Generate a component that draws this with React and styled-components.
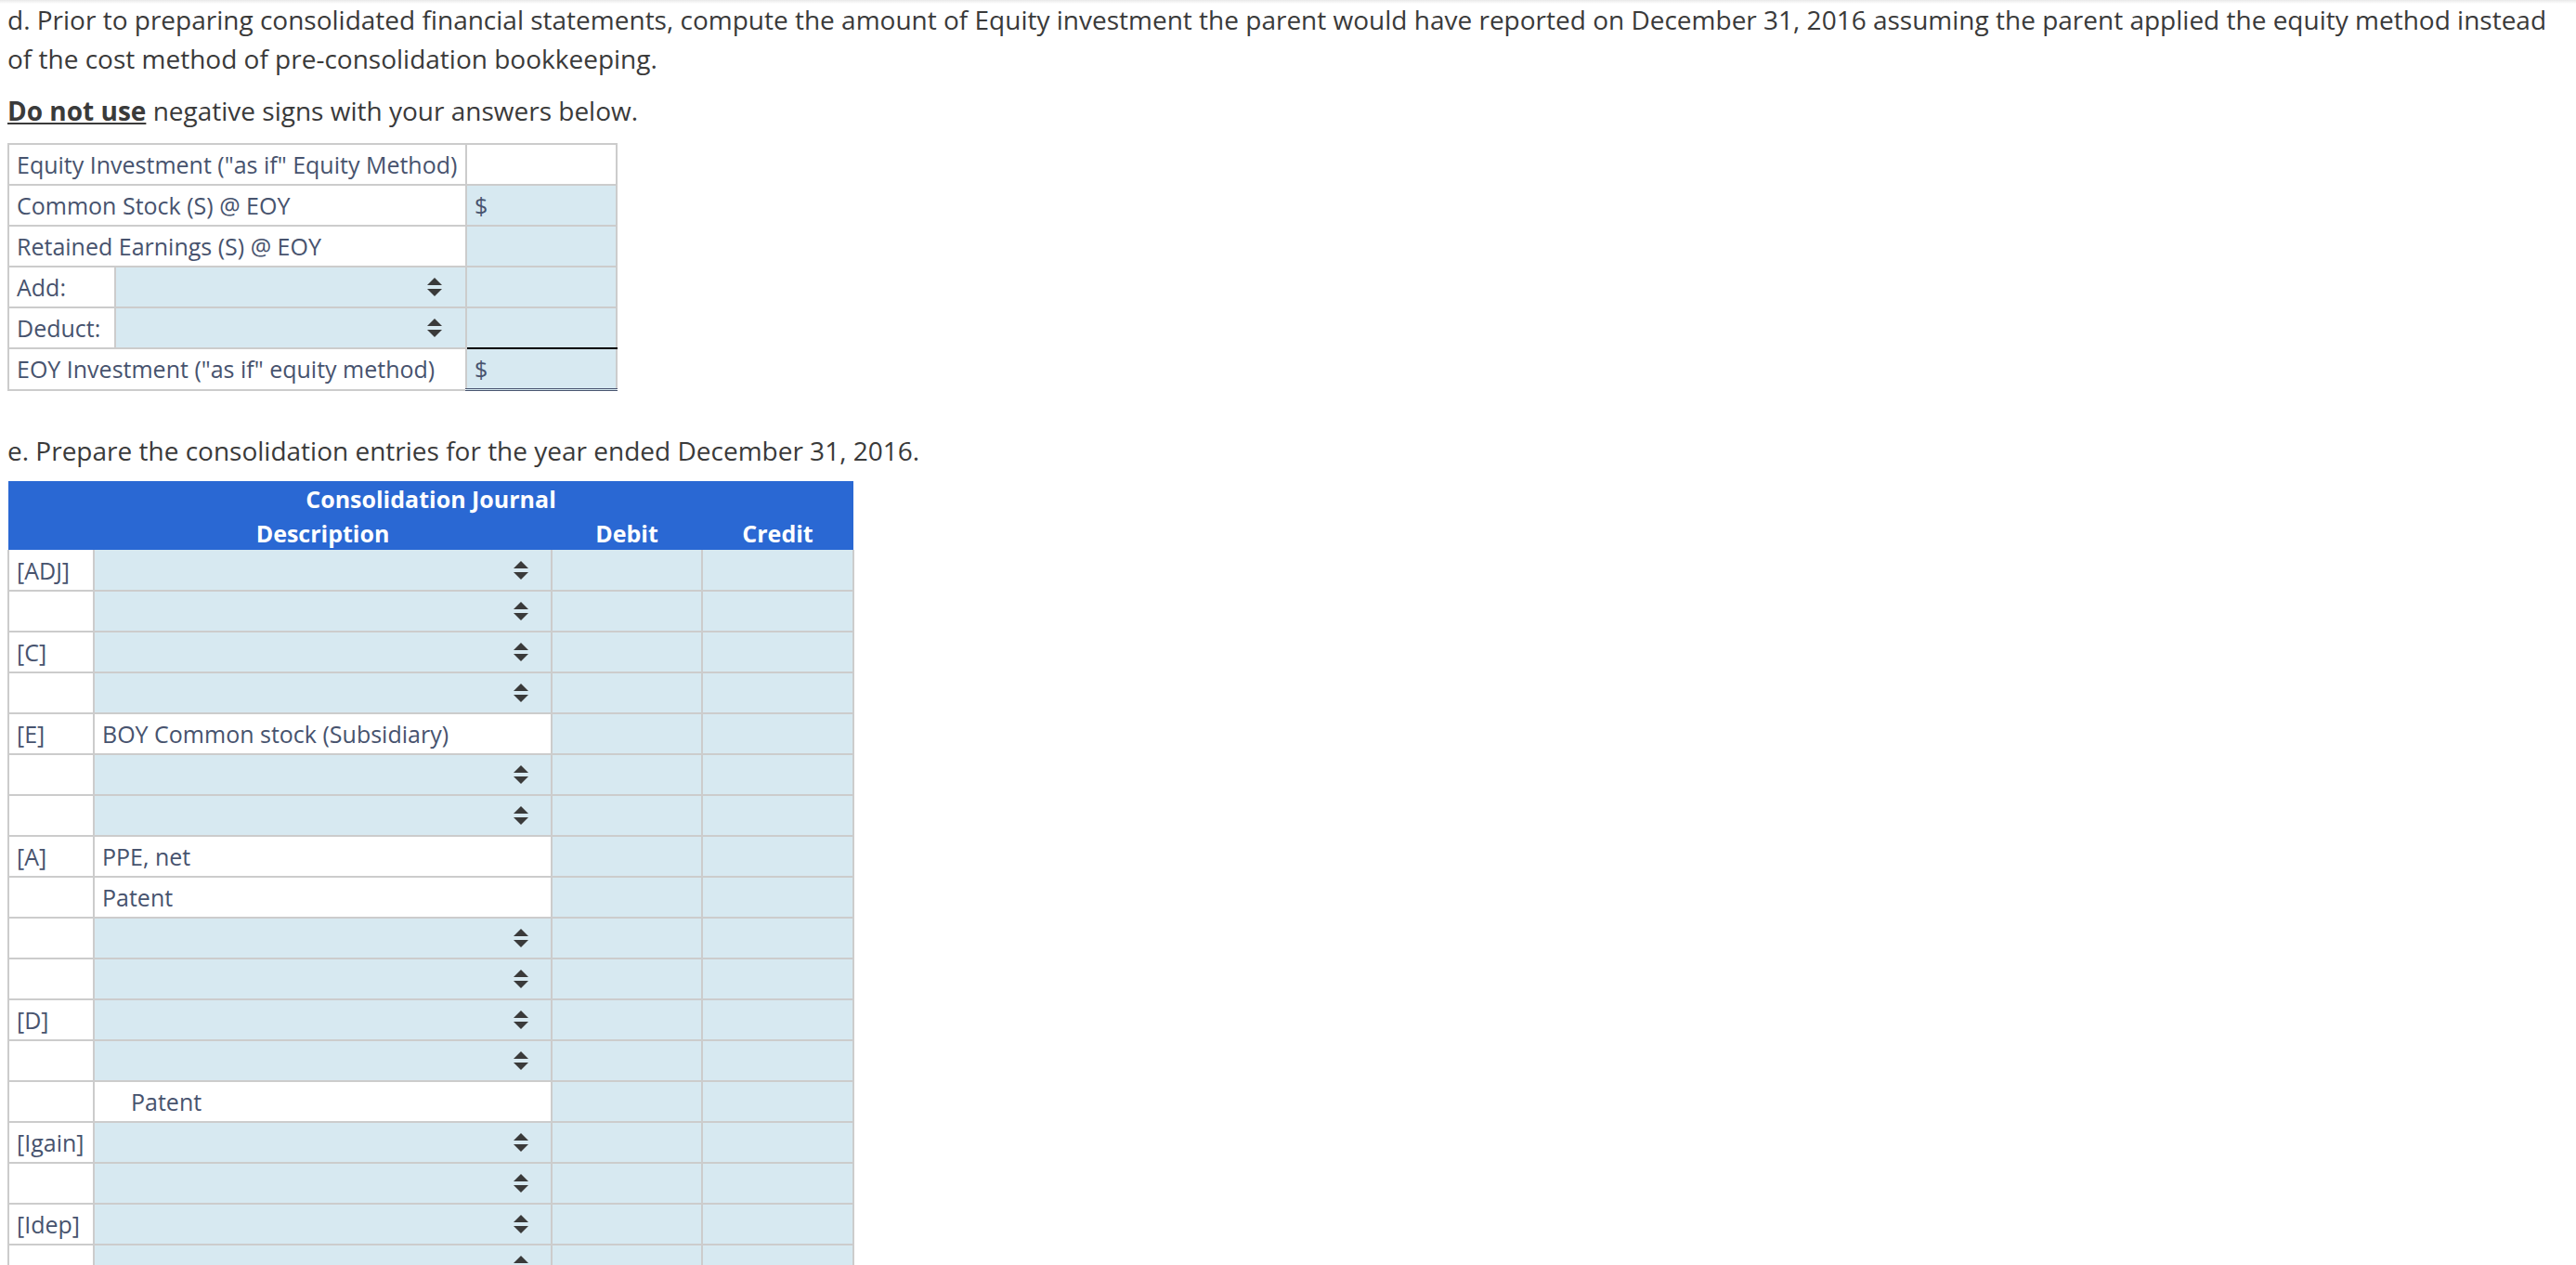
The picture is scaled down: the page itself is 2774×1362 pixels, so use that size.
import React from 'react';
import styled, { createGlobalStyle } from 'styled-components';

const GlobalStyle = createGlobalStyle`
  html, body {
    margin: 0;
    padding: 0;
    height: 1362px;
    overflow: hidden;
    background: #fff;
  }
  body {
    font-family: "Open Sans", "Liberation Sans", sans-serif;
    color: #3a3a3a;
  }
`;

const TopShade = styled.div`
  position: absolute;
  top: 0;
  left: 0;
  right: 0;
  height: 4px;
  background: linear-gradient(#e9e9e9, #fff);
`;

const Page = styled.div`
  padding: 0 8px;
`;

const Paragraph = styled.p`
  margin: ${(p) => p.$margin || '0'};
  font-size: 28px;
  line-height: 42px;
`;

const Strong = styled.span`
  font-weight: 700;
  text-decoration: underline;
`;

const Sheet = styled.table`
  border-collapse: collapse;
  table-layout: fixed;
  font-size: 25px;
  line-height: 36px;
  color: #47536e;
`;

const SummarySheet = styled(Sheet)`
  width: 655px;
  margin: 14px 0 0;
`;

const JournalSheet = styled(Sheet)`
  width: 910px;
  margin: 0;

  tbody tr:first-child td {
    height: 43px;
    border-top: 0;
  }
`;

const Head = styled.th`
  height: 37px;
  padding: 0;
  background: #2a68d3;
  color: #fff;
  font-weight: 700;
  text-align: center;
`;

const Cell = styled.td`
  height: 42px;
  padding: 0 0 0 ${(p) => (p.$indent ? '39px' : '8px')};
  border: 2px solid #ccc;
  border-bottom-color: ${(p) => (p.$ruled ? '#000' : '#ccc')};
  background: ${(p) => (p.$input ? '#d7e9f1' : '#fff')};
  white-space: nowrap;
  vertical-align: middle;
`;

const TotalCell = styled(Cell)`
  border-top: 2px solid #000;
  border-bottom: 3px double #47536e;
`;

const PickerCell = styled(Cell)`
  padding: 0;
`;

const Picker = styled.div`
  display: flex;
  justify-content: flex-end;
  align-items: center;
  height: 42px;
  padding-right: ${(p) => p.$inset}px;
`;

const Arrows = styled.svg`
  display: block;
  width: 16px;
  height: 20px;
  fill: #3a3a3a;
`;

const SelectArrows = () => (
  <Arrows viewBox="0 0 16 20">
    <path d="M8 0 L16 8 H0 Z" />
    <path d="M0 12 H16 L8 20 Z" />
  </Arrows>
);

const summaryRows = [
  { label: 'Equity Investment ("as if" Equity Method)' },
  { label: 'Common Stock (S) @ EOY', input: true, dollar: true },
  { label: 'Retained Earnings (S) @ EOY', input: true },
  { tag: 'Add:', input: true },
  { tag: 'Deduct:', input: true, ruled: true },
];

const journalRows = [
  { tag: '[ADJ]' },
  {},
  { tag: '[C]' },
  {},
  { tag: '[E]', text: 'BOY Common stock (Subsidiary)' },
  {},
  {},
  { tag: '[A]', text: 'PPE, net' },
  { text: 'Patent' },
  {},
  {},
  { tag: '[D]' },
  {},
  { text: 'Patent', indent: true },
  { tag: '[Igain]' },
  {},
  { tag: '[Idep]' },
  {},
];

export default function App() {
  return (
    <>
      <GlobalStyle />
      <TopShade />
      <Page>
        <Paragraph>
          d. Prior to preparing consolidated financial statements, compute the amount of Equity investment the parent would have reported on December 31, 2016 assuming the parent applied the equity method instead of the cost method of pre-consolidation bookkeeping.
        </Paragraph>
        <Paragraph $margin="14px 0 0">
          <Strong>Do not use</Strong> negative signs with your answers below.
        </Paragraph>

        <SummarySheet>
          <colgroup>
            <col style={{ width: 115 }} />
            <col style={{ width: 378 }} />
            <col style={{ width: 162 }} />
          </colgroup>
          <tbody>
            {summaryRows.map((row, i) => (
              <tr key={i}>
                {row.tag ? (
                  <>
                    <Cell>{row.tag}</Cell>
                    <PickerCell $input>
                      <Picker $inset={25}><SelectArrows /></Picker>
                    </PickerCell>
                  </>
                ) : (
                  <Cell colSpan={2}>{row.label}</Cell>
                )}
                <Cell $input={row.input} $ruled={row.ruled}>{row.dollar ? '$' : ''}</Cell>
              </tr>
            ))}
            <tr>
              <Cell colSpan={2}>EOY Investment ("as if" equity method)</Cell>
              <TotalCell $input>$</TotalCell>
            </tr>
          </tbody>
        </SummarySheet>

        <Paragraph $margin="43px 0 12px">
          e. Prepare the consolidation entries for the year ended December 31, 2016.
        </Paragraph>

        <JournalSheet>
          <colgroup>
            <col style={{ width: 92 }} />
            <col style={{ width: 493 }} />
            <col style={{ width: 162 }} />
            <col style={{ width: 163 }} />
          </colgroup>
          <thead>
            <tr>
              <Head colSpan={4}>Consolidation Journal</Head>
            </tr>
            <tr>
              <Head />
              <Head>Description</Head>
              <Head>Debit</Head>
              <Head>Credit</Head>
            </tr>
          </thead>
          <tbody>
            {journalRows.map((row, i) => (
              <tr key={i}>
                <Cell>{row.tag}</Cell>
                {row.text ? (
                  <Cell $indent={row.indent}>{row.text}</Cell>
                ) : (
                  <PickerCell $input>
                    <Picker $inset={24}><SelectArrows /></Picker>
                  </PickerCell>
                )}
                <Cell $input />
                <Cell $input />
              </tr>
            ))}
          </tbody>
        </JournalSheet>
      </Page>
    </>
  );
}
